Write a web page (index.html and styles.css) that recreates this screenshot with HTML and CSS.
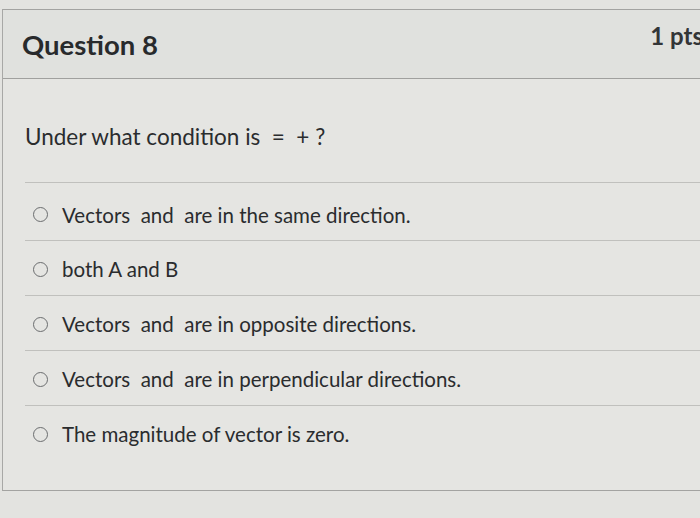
FILE: index.html
```html
<!DOCTYPE html>
<html lang="en">
<head>
<meta charset="utf-8">
<title>Question 8</title>
<link rel="stylesheet" href="styles.css">
</head>
<body>
<div class="card">
  <div class="header">
    <h2 class="title">Question 8</h2>
    <div class="points">1 pts</div>
  </div>
  <div class="content">
    <p class="question">Under what condition is &nbsp;= &nbsp;+ ?</p>
    <div class="answers">
      <label class="answer first"><span class="radio"></span><span class="label">Vectors &nbsp;and &nbsp;are in the same direction.</span></label>
      <label class="answer"><span class="radio"></span><span class="label">both A and B</span></label>
      <label class="answer"><span class="radio"></span><span class="label">Vectors &nbsp;and &nbsp;are in opposite directions.</span></label>
      <label class="answer"><span class="radio"></span><span class="label">Vectors &nbsp;and &nbsp;are in perpendicular directions.</span></label>
      <label class="answer"><span class="radio"></span><span class="label">The magnitude of vector is zero.</span></label>
    </div>
  </div>
</div>
</body>
</html>
```
FILE: styles.css
```css
html, body {
  margin: 0;
  padding: 0;
  overflow: hidden;
}
body {
  background: #e3e3e0;
  font-family: Lato, "Open Sans", "Liberation Sans", sans-serif;
  color: #2a2c2e;
  width: 700px;
  height: 518px;
}
.card {
  margin: 9px 0 0 2px;
  width: 720px;
  border-top: 1px solid #a3a3a1;
  border-left: 1px solid #a8a8a6;
  border-bottom: 1px solid #a3a3a1;
  background: #e5e5e2;
}
.header {
  height: 68px;
  background: #e0e1de;
  border-bottom: 1px solid #a0a09e;
  display: flex;
  justify-content: space-between;
  align-items: flex-start;
  padding: 0 0 0 19px;
}
.title {
  margin: 19px 0 0 0;
  font-size: 27.5px;
  font-weight: 700;
  line-height: 32px;
  color: #282a2c;
}
.points {
  margin: 12px 20px 0 0;
  font-size: 24px;
  font-weight: 700;
  line-height: 28px;
  color: #333537;
}
.content {
  padding: 0 0 30px 0;
}
.question {
  margin: 0;
  padding: 45px 0 0 22px;
  height: 58px;
  font-size: 22.5px;
  line-height: 26px;
}
.answers {
  margin-left: 22px;
}
.answer {
  display: flex;
  align-items: center;
  height: 55px;
  border-top: 1px solid #c0c0bd;
  padding-top: 2px;
  box-sizing: border-box;
}
.answer.first {
  height: 58px;
  padding-top: 6px;
}
.radio {
  width: 15px;
  height: 15px;
  box-sizing: border-box;
  border: 1.6px solid #6b6d6f;
  border-radius: 50%;
  margin: 0 14px 0 8px;
  flex: none;
}
.label {
  font-size: 20.5px;
  line-height: 24px;
}
```
